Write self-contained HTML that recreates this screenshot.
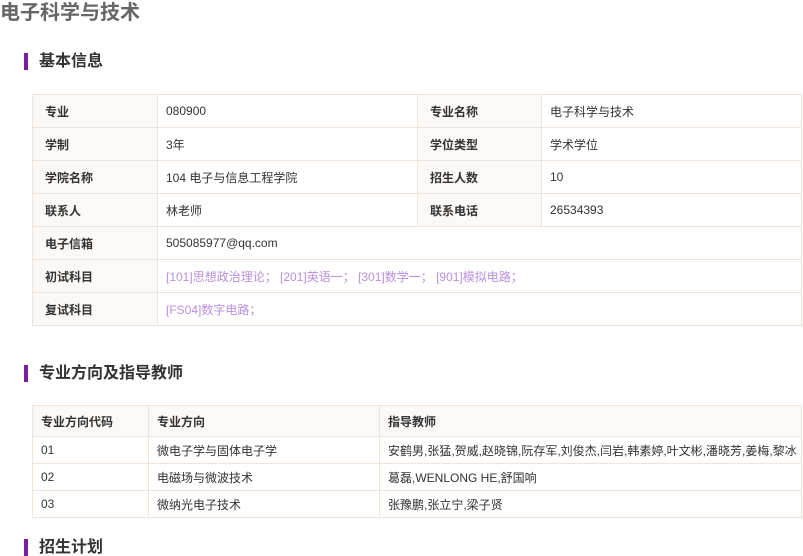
<!DOCTYPE html>
<html><head><meta charset="utf-8"><style>
*{margin:0;padding:0;box-sizing:border-box}
body{width:803px;height:542px;overflow:hidden;background:#fff;font-family:"Liberation Sans","Noto Sans CJK SC",sans-serif;color:#333;position:relative}
h1{position:absolute;left:0;top:0;font-size:20px;font-weight:bold;color:#666;line-height:26px}
.h2{position:absolute;left:24px;font-size:16px;font-weight:bold;color:#333;padding-left:11px;border-left:4px solid #7b1fa2;height:17px;line-height:17px}
table{position:absolute;left:32px;border-collapse:collapse;font-size:12px;table-layout:fixed}
td,th{border:1px solid #f2e4d8;text-align:left;white-space:nowrap;overflow:hidden}
.t1 td{height:33px;padding-left:8px}
.t1 td.k{background:#fbf8f5;font-weight:bold;padding-left:12px}
.t2 td{height:27px;padding-left:8px}
.t2 tr.hd td{height:31px;background:#fbf8f5;font-weight:bold}
a{color:#b98fdc;text-decoration:none}
</style></head><body>
<h1>电子科学与技术</h1>
<div class="h2" style="top:53px">基本信息</div>
<table class="t1" style="top:94px;width:769px">
<col style="width:125px"><col style="width:260px"><col style="width:124px"><col style="width:260px">
<tr><td class="k">专业</td><td>080900</td><td class="k">专业名称</td><td>电子科学与技术</td></tr>
<tr><td class="k">学制</td><td>3年</td><td class="k">学位类型</td><td>学术学位</td></tr>
<tr><td class="k">学院名称</td><td>104 电子与信息工程学院</td><td class="k">招生人数</td><td>10</td></tr>
<tr><td class="k">联系人</td><td>林老师</td><td class="k">联系电话</td><td>26534393</td></tr>
<tr><td class="k">电子信箱</td><td colspan="3">505085977@qq.com</td></tr>
<tr><td class="k">初试科目</td><td colspan="3"><a>[101]思想政治理论； [201]英语一； [301]数学一； [901]模拟电路；</a></td></tr>
<tr><td class="k">复试科目</td><td colspan="3"><a>[FS04]数字电路；</a></td></tr>
</table>
<div class="h2" style="top:365px">专业方向及指导教师</div>
<table class="t2" style="top:405px;width:769px">
<col style="width:116px"><col style="width:231px"><col style="width:422px">
<tr class="hd"><td>专业方向代码</td><td>专业方向</td><td>指导教师</td></tr>
<tr><td>01</td><td>微电子学与固体电子学</td><td>安鹤男,张猛,贺威,赵晓锦,阮存军,刘俊杰,闫岩,韩素婷,叶文彬,潘晓芳,姜梅,黎冰</td></tr>
<tr><td>02</td><td>电磁场与微波技术</td><td>葛磊,WENLONG HE,舒国响</td></tr>
<tr><td>03</td><td>微纳光电子技术</td><td>张豫鹏,张立宁,梁子贤</td></tr>
</table>
<div class="h2" style="top:539px">招生计划</div>
</body></html>
